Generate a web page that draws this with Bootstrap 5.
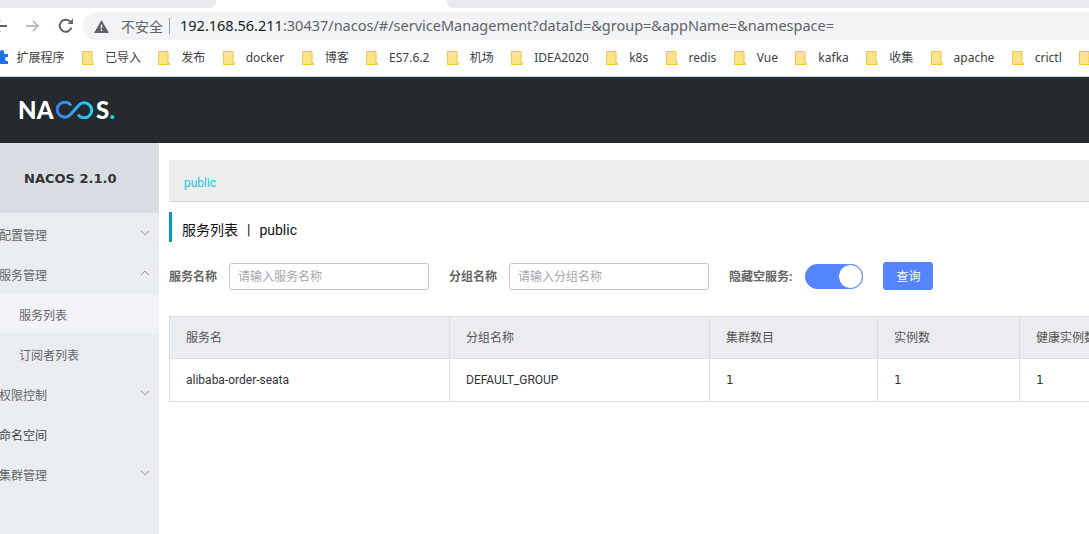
<!DOCTYPE html>
<html lang="zh-CN">
<head>
  <meta charset="UTF-8">
  <meta name="viewport" content="width=device-width, initial-scale=1.0">
  <title>Nacos</title>
  <link href="https://cdn.jsdelivr.net/npm/bootstrap@5.3.3/dist/css/bootstrap.min.css" rel="stylesheet" crossorigin="anonymous">
  <style>
    html, body { height: 534px; overflow: hidden; }
    body { font-family: "Noto Sans", "Noto Sans CJK SC", sans-serif; font-size: 12px; color: #333; background: #fff; width: 1089px; }
    /* browser chrome */
    .tab-strip { height: 8px; background: #fff; }
    .tab-left { width: 216px; background: #e8eaed; border-radius: 0 0 6px 0; }
    .tab-right { width: 642px; margin-left: 231px; background: #e8eaed; border-radius: 0 0 0 6px; }
    .tool-row { height: 32px; padding-top: 4px; }
    .nav-glyphs { width: 83px; flex: none; }
    .nav-glyphs svg { position: relative; }
    .addr-bar { flex: 1; height: 28px; background: #f1f3f4; border-radius: 14px 0 0 14px; padding-left: 11px; font-size: 14.5px; color: #5f6368; white-space: nowrap; }
    .addr-warn { color: #5f6368; font-size: 14px; margin: 0 6px 0 12px; }
    .addr-sep { width: 1px; height: 16px; background: #9aa0a6; margin: 0 10px 0 0; }
    .addr-host { color: #202124; }
    .bm-row { height: 37px; border-bottom: 1px solid #d8d9db; white-space: nowrap; font-size: 12px; color: #3c4043; padding-left: 16.5px; }
    .bm-item { display: flex; align-items: center; flex: none; margin-left: 17.4px; }
    .bm-item:first-child { margin-left: 0; }
    .bm-item svg { margin-right: 11px; }
    .ext-icon { position: absolute; left: -4px; top: 50px; }
    /* nacos header */
    .nacos-top { height: 66px; background: #252a2f; padding-left: 18px; }
    .logo-word { font-family: "Lato", sans-serif; font-size: 24px; font-weight: 900; color: #fff; line-height: 1; letter-spacing: .3px; }
    .logo-word svg { margin: 0 -1px 0 -2px; }
    .logo-dot { color: #22cfee; }
    /* sidebar */
    .side-wrap { width: 159px; height: 391px; background: #e9ecf1; flex: none; }
    .side-title { height: 70px; background: #d8dce3; font-family: "DejaVu Sans", sans-serif; font-size: 13px; font-weight: 700; color: #333; padding: 1px 0 0 24px; }
    .side-item { height: 40px; padding: 6px 9px 0 0; color: #666; font-size: 12px; margin-left: -1px; }
    .side-item.side-dark { color: #444; }
    .side-chev { margin-bottom: 6px; }
    .side-sub { height: 40px; padding: 6px 0 0 19px; color: #666; font-size: 12px; }
    .side-sub.side-on { background: #f2f3f7; }
    /* content */
    .main-area { padding: 17px 0 0 10px; flex: 1; min-width: 0; overflow: hidden; font-family: Roboto, "Noto Sans CJK SC", sans-serif; }
    .crumb-bar { height: 42px; background: #eee; border-bottom: 1px solid #d4d5d6; padding: 4px 0 0 15px; color: #22c4dd; }
    .page-head { margin-top: 10px; height: 30px; border-left: 3px solid #09c; padding: 6px 0 0 10px; font-size: 14px; color: #111; }
    .head-bar { margin: 0 9px 0 9px; }
    .query-row { margin-top: 20px; height: 28px; }
    .query-label { font-weight: 700; color: #666; font-size: 12px; flex: none; padding-top: 2px; }
    .query-input { width: 200px; height: 27px; border: 1px solid #c4c6cf; border-radius: 3px; padding: 2px 8px 0; font-size: 12px; margin: 0 20px 0 12px; flex: none; }
    .query-input::placeholder { color: #a5a7ae; }
    .hide-switch { width: 58px; height: 25px; margin: 0 20px 0 13px; background: #5584ff; border-radius: 13px; flex: none; position: relative; }
    .hide-knob { position: absolute; right: 0; top: 0; width: 25px; height: 25px; border-radius: 50%; background: #fff; border: 1px solid #5584ff; }
    .query-btn { width: 50px; height: 28px; padding: 2px 0 0; font-size: 12px; background: #5584ff; border: 0; border-radius: 3px; color: #fff; flex: none; }
    .svc-table { table-layout: fixed; width: 1060px; margin: 26px 0 0 0; font-size: 12px; border-color: #dcdee3; color: #333; }
    .svc-table th { font-weight: 400; background: #ebecf0; height: 42px; padding: 1px 16px 0; vertical-align: middle; color: #555; border-color: #dcdee3; white-space: nowrap; overflow: hidden; }
    .svc-table td { height: 43px; padding: 0 16px; vertical-align: middle; border-color: #dcdee3; }
    .svc-table td.num-cell { font-family: "DejaVu Sans", sans-serif; }
  </style>
</head>
<body>
  <!-- browser top -->
  <div class="tab-strip d-flex"><div class="tab-left h-100"></div><div class="tab-right h-100"></div></div>
  <div class="tool-row d-flex">
    <div class="nav-glyphs d-flex align-items-center">
      <svg width="12" height="14" viewBox="0 0 12 14" class="ms-0"><path d="M-4 7H8M1 1L-5 7 1 13" transform="translate(-1 0)" fill="none" stroke="#5f6368" stroke-width="2"/></svg>
      <svg width="14" height="14" viewBox="0 0 14 14" style="left:14px"><path d="M0 7H12M7 2L12 7 7 12" fill="none" stroke="#bdc1c6" stroke-width="2"/></svg>
      <svg width="16" height="16" viewBox="0 0 16 16" style="left:32px"><path d="M13.500 9.500A6 6 0 1 1 12 3.500" fill="none" stroke="#5f6368" stroke-width="2"/><path d="M9.500 6H15V.5z" fill="#5f6368"/></svg>
    </div>
    <div class="addr-bar d-flex align-items-center">
      <svg width="15" height="13" viewBox="0 0 15 13"><path d="M7.500 0L15 13H0z" fill="#5f6368"/><path d="M6.800 4.500h1.400v4H6.800zM6.800 9.500h1.400v1.400H6.800z" fill="#f1f3f4"/></svg>
      <span class="addr-warn">不安全</span><span class="addr-sep"></span><span><span class="addr-host">192.168.56.211</span>:30437/nacos/#/serviceManagement?dataId=&amp;group=&amp;appName=&amp;namespace=</span>
    </div>
  </div>
  <div class="bm-row d-flex align-items-center" id="bookmarks">
    <div class="bm-item"><span>扩展程序</span></div>
  </div>
  <svg class="ext-icon" width="14" height="14" viewBox="0 0 14 14"><path d="M1 4h3V2a2 2 0 0 1 4 0v2h4v3h-1a2 2 0 0 0 0 4h1v3H1z" fill="#1a73e8"/></svg>

  <!-- nacos header -->
  <div class="nacos-top d-flex align-items-center">
    <span class="logo-word d-flex align-items-center">NA<svg width="45" height="18" viewBox="0 0 45 18"><defs><linearGradient id="infGrad" x1="0" x2="1" y1="0" y2="0"><stop offset="0" stop-color="#3f7cf0"/><stop offset="1" stop-color="#1fd5ee"/></linearGradient></defs><path d="M19 4.500A7.500 7.500 0 1 0 18.500 13.500L26.500 4.500A7.500 7.500 0 1 1 26 13.500" fill="none" stroke="url(#infGrad)" stroke-width="3"/></svg>S<span class="logo-dot">.</span></span>
  </div>

  <div class="d-flex">
    <!-- sidebar -->
    <div class="side-wrap">
      <div class="side-title d-flex align-items-center">NACOS 2.1.0</div>
      <div class="side-item d-flex align-items-center justify-content-between"><span>配置管理</span><svg width="10" height="6" viewBox="0 0 10 6" class="side-chev"><path d="M1 1L5 5 9 1" fill="none" stroke="#999" stroke-width="1"/></svg></div>
      <div class="side-item d-flex align-items-center justify-content-between"><span>服务管理</span><svg width="10" height="6" viewBox="0 0 10 6" class="side-chev"><path d="M1 5L5 1 9 5" fill="none" stroke="#999" stroke-width="1"/></svg></div>
      <div class="side-sub side-on d-flex align-items-center">服务列表</div>
      <div class="side-sub d-flex align-items-center">订阅者列表</div>
      <div class="side-item d-flex align-items-center justify-content-between"><span>权限控制</span><svg width="10" height="6" viewBox="0 0 10 6" class="side-chev"><path d="M1 1L5 5 9 1" fill="none" stroke="#999" stroke-width="1"/></svg></div>
      <div class="side-item side-dark d-flex align-items-center"><span>命名空间</span></div>
      <div class="side-item d-flex align-items-center justify-content-between"><span>集群管理</span><svg width="10" height="6" viewBox="0 0 10 6" class="side-chev"><path d="M1 1L5 5 9 1" fill="none" stroke="#999" stroke-width="1"/></svg></div>
    </div>

    <!-- content -->
    <div class="main-area">
      <div class="crumb-bar d-flex align-items-center">public</div>
      <div class="page-head d-flex align-items-center">服务列表<span class="head-bar">|</span>public</div>
      <div class="query-row d-flex align-items-center">
        <span class="query-label">服务名称</span>
        <input class="query-input" type="text" placeholder="请输入服务名称">
        <span class="query-label">分组名称</span>
        <input class="query-input" type="text" placeholder="请输入分组名称">
        <span class="query-label">隐藏空服务:</span>
        <div class="hide-switch"><div class="hide-knob"></div></div>
        <button class="btn query-btn" type="button">查询</button>
      </div>
      <table class="table table-bordered svc-table">
        <colgroup><col style="width:280px"><col style="width:260px"><col style="width:168px"><col style="width:142px"><col style="width:210px"></colgroup>
        <thead><tr><th>服务名</th><th>分组名称</th><th>集群数目</th><th>实例数</th><th>健康实例数</th></tr></thead>
        <tbody><tr><td>alibaba-order-seata</td><td>DEFAULT_GROUP</td><td class="num-cell">1</td><td class="num-cell">1</td><td class="num-cell">1</td></tr></tbody>
      </table>
    </div>
  </div>

  <script src="https://cdn.jsdelivr.net/npm/bootstrap@5.3.3/dist/js/bootstrap.bundle.min.js" crossorigin="anonymous"></script>
  <script>
    // bookmark folders
    const names = ['已导入','发布','docker','博客','ES7.6.2','机场','IDEA2020','k8s','redis','Vue','kafka','收集','apache','crictl',''];
    const row = document.getElementById('bookmarks');
    names.forEach(n => {
      const el = document.createElement('div');
      el.className = 'bm-item';
      el.innerHTML = `<svg width="12" height="14" viewBox="0 0 12 14"><path d="M.5.5H10V12H11.5V13.500H.5z" fill="#fee38c" stroke="#f0c63e"/></svg><span>${n}</span>`;
      row.appendChild(el);
    });
  </script>
</body>
</html>
